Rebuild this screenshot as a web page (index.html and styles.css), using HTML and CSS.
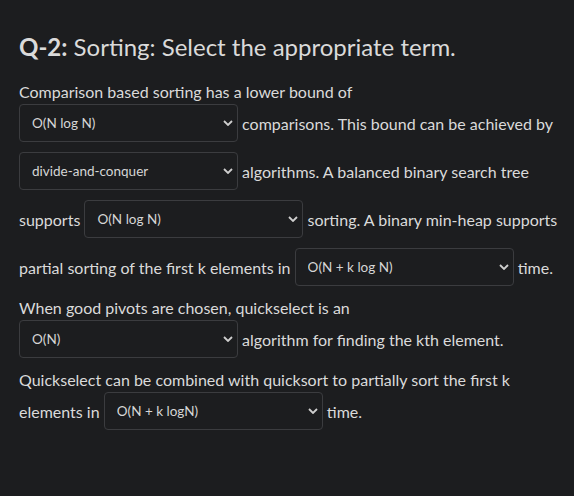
FILE: index.html
```html
<html>
	<head>
		<meta charset="utf-8" />
		<meta name="viewport" content="width=device-width, initial-scale=1">
		<title>Q-2: Sorting</title>
		<link rel="stylesheet" href="styles.css">
	</head>
	<body>
		<div class="question">
			<h2 class="q-title"><b>Q-2:</b> Sorting: Select the appropriate term.</h2>
			<div class="q-body">
				Comparison based sorting has a lower bound of
				<span class="term"><select><option>O(N log N)</option></select><svg viewBox="0 0 10 6"><path d="M1 1l4 4 4-4" /></svg></span>
				comparisons. This bound can be achieved by
				<span class="term"><select><option>divide-and-conquer</option></select><svg viewBox="0 0 10 6"><path d="M1 1l4 4 4-4" /></svg></span>
				algorithms. A balanced binary search tree supports
				<span class="term"><select><option>O(N log N)</option></select><svg viewBox="0 0 10 6"><path d="M1 1l4 4 4-4" /></svg></span>
				sorting. A binary min-heap supports partial sorting of the first k elements in
				<span class="term"><select><option>O(N + k log N)</option></select><svg viewBox="0 0 10 6"><path d="M1 1l4 4 4-4" /></svg></span>
				time. When good pivots are chosen, quickselect is an
				<span class="term"><select><option>O(N)</option></select><svg viewBox="0 0 10 6"><path d="M1 1l4 4 4-4" /></svg></span>
				algorithm for finding the kth element. Quickselect can be combined with quicksort to partially sort the first k elements in
				<span class="term"><select><option>O(N + k logN)</option></select><svg viewBox="0 0 10 6"><path d="M1 1l4 4 4-4" /></svg></span>
				time.
			</div>
		</div>
	</body>
</html>
```

FILE: styles.css
```css
body {
	margin: 0;
	background: #1c1d1f;
	color: #dadada;
	font-family: Lato, "Noto Sans", sans-serif;
}

.question {
	padding: 33px 10px 0 19px;
}

.q-title {
	margin: 0 0 18px 0;
	font-size: 24px;
	font-weight: normal;
	line-height: 1.2;
}

.q-title b {
	font-weight: bold;
}

.q-body {
	font-size: 16px;
	line-height: 24px;
}

.term {
	position: relative;
	display: inline-block;
	vertical-align: 2px;
	margin: 0 0 10px 0;
}

.term select {
	-webkit-appearance: none;
	appearance: none;
	box-sizing: border-box;
	width: 219px;
	height: 38px;
	padding: 0 28px 0 12px;
	border: 1px solid #3b3c3f;
	border-radius: 4px;
	background: transparent;
	color: #d6d6d6;
	font-family: Lato, "Noto Sans", sans-serif;
	font-size: 13.5px;
	outline: none;
}

.term svg {
	position: absolute;
	right: 5px;
	top: 16px;
	width: 10px;
	height: 6px;
	fill: none;
	stroke: #cfcfcf;
	stroke-width: 1.8;
	pointer-events: none;
}
```
